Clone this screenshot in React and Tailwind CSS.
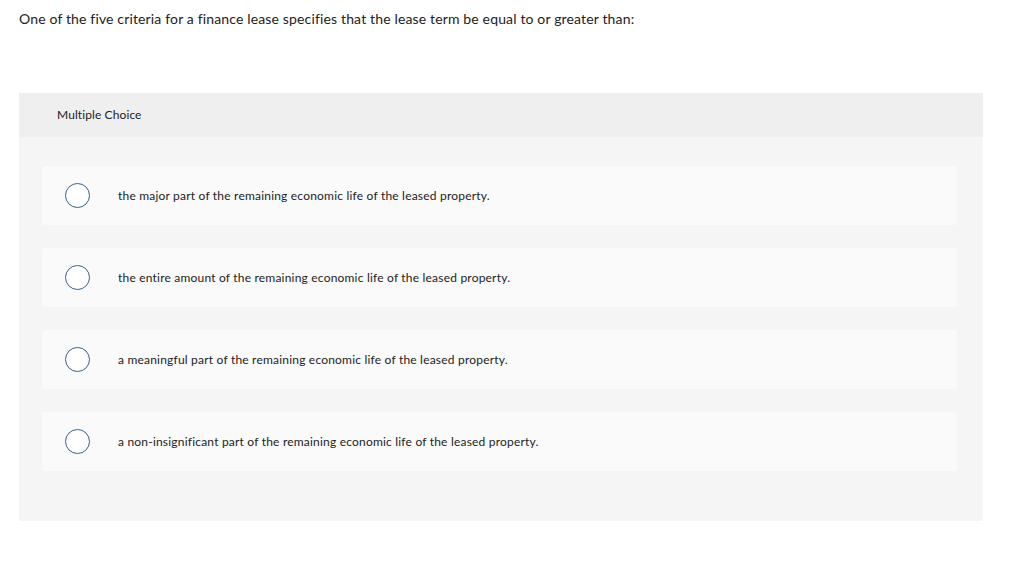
export default function App() {
  const choices = [
    "the major part of the remaining economic life of the leased property.",
    "the entire amount of the remaining economic life of the leased property.",
    "a meaningful part of the remaining economic life of the leased property.",
    "a non-insignificant part of the remaining economic life of the leased property.",
  ];

  return (
    <div className="w-[1024px] h-[579px] bg-white font-['Lato','Liberation_Sans',sans-serif] text-[#222]">
      {/* Question */}
      <p className="pl-[19px] pt-[9px] text-[14px] leading-[20px] tracking-[0.15px]">
        One of the five criteria for a finance lease specifies that the lease term be equal to or greater than:
      </p>

      {/* Answer panel */}
      <div className="ml-[19px] mt-[64px] w-[964px] bg-[#f5f5f5] rounded-[2px] pb-[50px]">
        <div className="h-[44px] bg-[#efefef] flex items-center pl-[38px] text-[12px] tracking-[0.1px]">
          Multiple Choice
        </div>

        <div className="pt-[29px] pl-[23px] pr-[26px] flex flex-col gap-[23px]">
          {choices.map((c, i) => (
            <div key={i} className="h-[59px] bg-[#fafafa] rounded-[3px] flex items-center pl-[23px]">
              <span className="w-[25px] h-[25px] rounded-full border border-[#3b5f8a] bg-white shrink-0" />
              <span className="ml-[28px] text-[12px] tracking-[0.2px] text-[#222]">{c}</span>
            </div>
          ))}
        </div>
      </div>
    </div>
  );
}
